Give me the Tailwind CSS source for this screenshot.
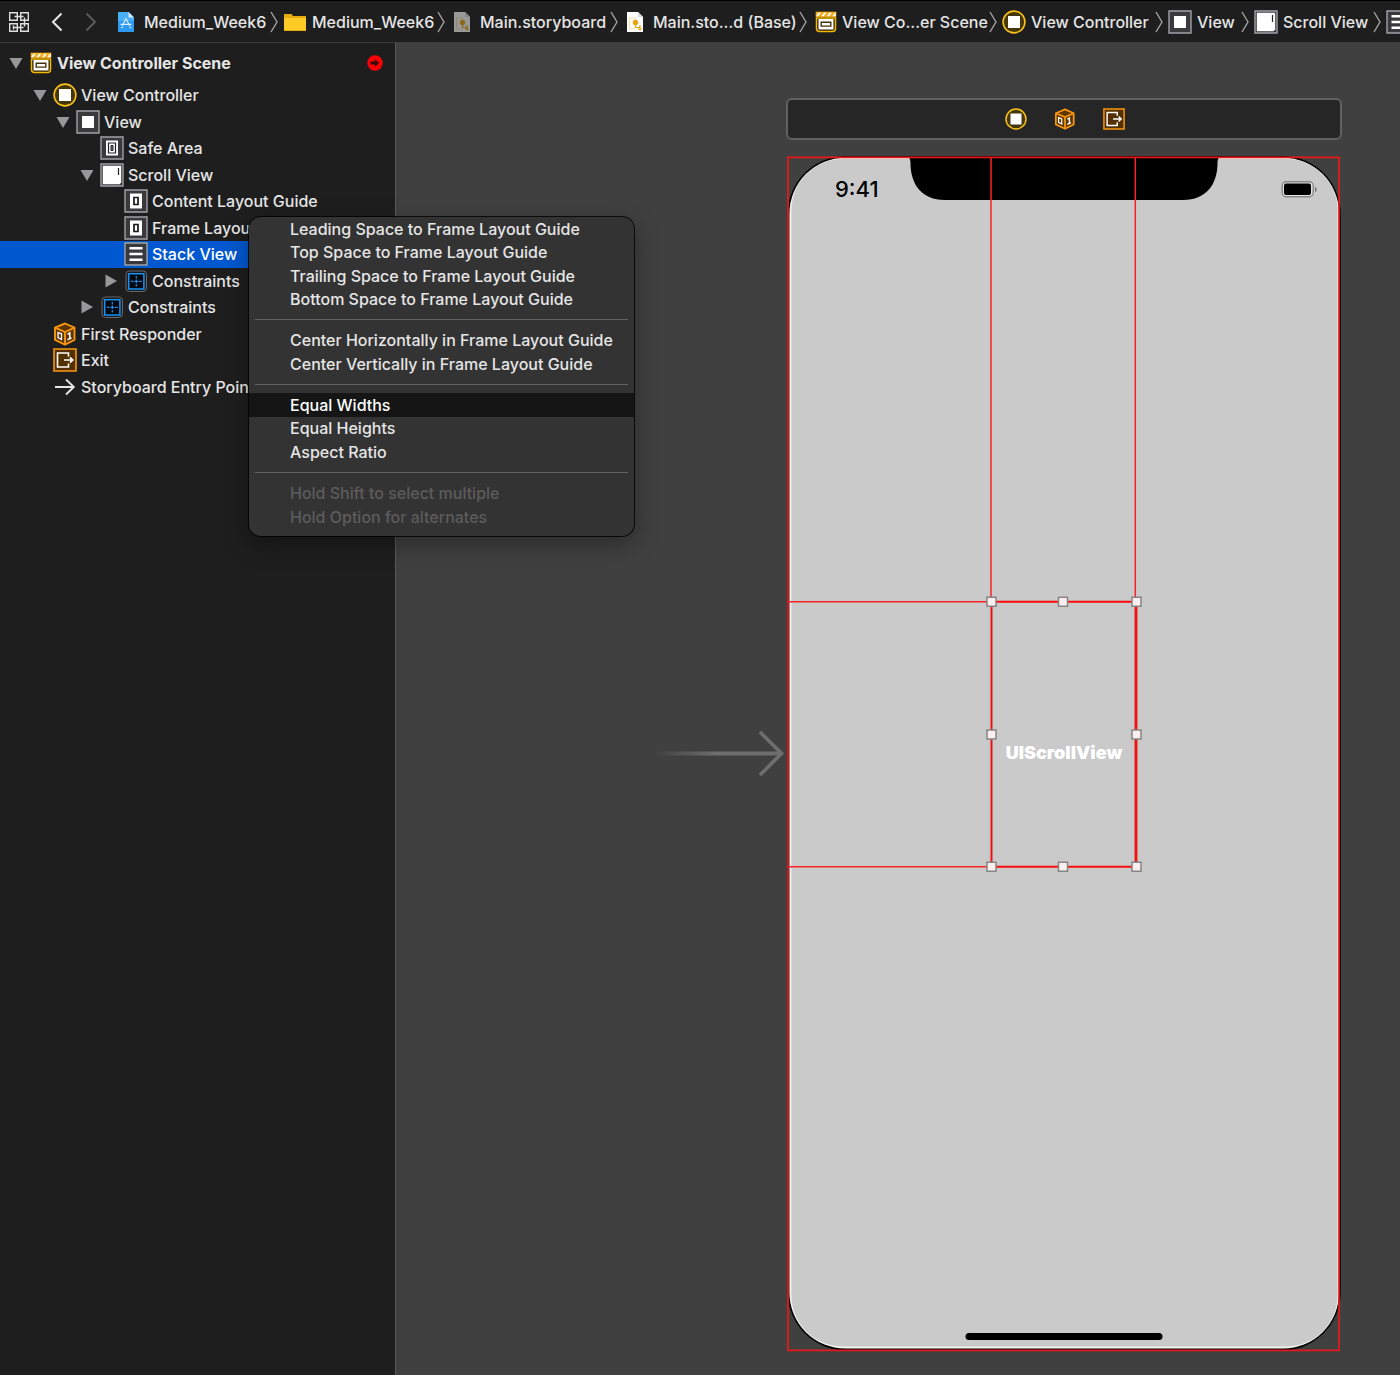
<!DOCTYPE html>
<html lang="en">
<head>
  <meta charset="UTF-8">
  <meta name="viewport" content="width=device-width, initial-scale=1.0">
  <title>Main.storyboard - Medium_Week6</title>
  <script src="https://cdn.jsdelivr.net/npm/@tailwindcss/browser@4"></script>
</head>
<body class="relative min-h-screen flex flex-col overflow-x-hidden bg-[#404040] text-[#e6e6e6] text-base font-medium font-['Inter',sans-serif]">

  <!-- Icon set -->
  <svg class="hidden" aria-hidden="true">
    <symbol id="i-down" viewBox="0 0 14 14"><path d="M.5 2h13L7 13z" fill="#98989a"/></symbol>
    <symbol id="i-right" viewBox="0 0 14 14"><path d="M1.500 .5v13L13 7z" fill="#98989a"/></symbol>
    <symbol id="i-sep" viewBox="0 0 8 22"><path d="M1 1l6 10-6 10" fill="none" stroke="#a3a3a3" stroke-width="1.400"/></symbol>
    <symbol id="i-scene" viewBox="0 0 22 22">
      <path d="M1.500 7v10.500a3 3 0 003 3h13a3 3 0 003-3V7z" fill="#2a2006" stroke="#f5b800" stroke-width="1.500"/>
      <path d="M.7 .7h20.600v5.200H.7z" fill="#f7ae1b"/>
      <path d="M1 5.300L3.500 1.800h2.300l-2.500 3.500zM6.500 5.300L9 1.800h2.300l-2.500 3.500zM12 5.300l2.500-3.500h2.300l-2.500 3.500zM17.300 5.300l2.500-3.500h1v2.500l-.7 1z" fill="#fff"/>
      <path d="M3.500 8h15v10.500h-15z" fill="#fff"/>
      <path d="M6.200 11.300h9.600v3.800H6.200z" fill="#fff" stroke="#42300a" stroke-width="1.400"/>
    </symbol>
    <symbol id="i-vc" viewBox="0 0 24 24">
      <circle cx="12" cy="12" r="10.900" fill="#453807" stroke="#fbc21b" stroke-width="1.600"/>
      <path d="M6 6h12v12H6z" fill="#fff"/>
    </symbol>
    <symbol id="i-box" viewBox="0 0 24 24">
      <path d="M1 1h22v22H1z" fill="#3a3a3d" stroke="#a2a2a6" stroke-width="1.400"/>
    </symbol>
    <symbol id="i-view" viewBox="0 0 24 24"><use href="#i-box"/><path d="M6 6h12v12H6z" fill="#fff"/></symbol>
    <symbol id="i-safe" viewBox="0 0 24 24">
      <use href="#i-box"/><path d="M6 4.500h12v15H6z" fill="#fff"/>
      <path d="M8.500 7h7v10h-7z" fill="#fff" stroke="#222" stroke-width="1.200"/>
      <path d="M11 9.500h2v5h-2z" fill="#777" stroke="#222" stroke-width="1"/>
    </symbol>
    <symbol id="i-guide" viewBox="0 0 24 24">
      <use href="#i-box"/><path d="M6 4.500h12v15H6z" fill="#fff"/>
      <path d="M10 8.500h4v7h-4z" fill="#fff" stroke="#161616" stroke-width="1.700"/>
    </symbol>
    <symbol id="i-scroll" viewBox="0 0 24 24">
      <use href="#i-box"/><path d="M2.800 2.800h18.400v16.700l-1.700 1.700H2.800z" fill="#fff"/>
      <path d="M18.500 5v7" stroke="#222" stroke-width="1.200"/>
    </symbol>
    <symbol id="i-stack" viewBox="0 0 24 24">
      <use href="#i-box"/><path d="M5.500 6.300h13M5.500 12h13M5.500 17.700h13" stroke="#fff" stroke-width="2.600"/>
    </symbol>
    <symbol id="i-cons" viewBox="0 0 24 24">
      <rect x="2" y="2" width="20.500" height="20.500" rx="3.500" fill="#1b1b1d" stroke="#68686c"/>
      <path d="M4.700 4.700h15.200v15.200H4.700z" fill="#04080f" stroke="#1593f5" stroke-width="1.500"/>
      <path d="M7 12.300h2.600M10.600 12.300h3.400M15 12.300h2.600M12.300 7v2.600M12.300 10.600v3.400M12.300 15v2.600" stroke="#1593f5" stroke-width="1.200"/>
    </symbol>
    <symbol id="i-first" viewBox="0 0 24 24">
      <path d="M12 1.500l9.500 4.200v12.300L12 22.700 2 18V5.700z" fill="#5c3500" stroke="#f7960f" stroke-width="1.900" stroke-linejoin="round"/>
      <path d="M2 5.700l10 4.300 9.500-4.300M12 10v12.500" fill="none" stroke="#f7960f" stroke-width="1.900"/>
      <path d="M5 10.500l3.500 1.300v5.600L5 15.700z" fill="none" stroke="#fff" stroke-width="1.300"/>
      <path d="M14.500 12.300l2.300-1.400v6M14.500 17.800l4-1.900" fill="none" stroke="#fff" stroke-width="1.500"/>
    </symbol>
    <symbol id="i-exit" viewBox="0 0 24 24">
      <path d="M1 1h22v22H1z" fill="#543001" stroke="#f7960f" stroke-width="1.600"/>
      <path d="M15.500 8.500V5h-11v14h11v-3.500M11 12h8.500M17 9.300l2.800 2.700-2.800 2.700" fill="none" stroke="#fff" stroke-width="1.600"/>
    </symbol>
    <symbol id="i-entry" viewBox="0 0 24 24">
      <path d="M2 12h18.500M13 4.500l7.800 7.500-7.800 7.500" fill="none" stroke="#e6e6e6" stroke-width="1.900"/>
    </symbol>
    <symbol id="i-proj" viewBox="0 0 18 22">
      <path d="M1 1h10.500L17 6.500V21H1z" fill="#2d9bf3"/>
      <path d="M1 1h10.500L17 6.500V10H1z" fill="#48aff8"/>
      <path d="M11.500 1L17 6.500h-5.500z" fill="#d5ecfe"/>
      <path d="M9 7.500L5.300 15M9 7.500l3.800 7.500M3.500 13.300h11M4 16.500h2M12.500 16.500h2" fill="none" stroke="#d9efff" stroke-width="1.200"/>
    </symbol>
    <symbol id="i-folder" viewBox="0 0 24 22">
      <path d="M1 3h7.500l1.500 2h13v15H1z" fill="#e5ab10"/>
      <path d="M1 7h22v12H1z" fill="#fdcb25"/>
    </symbol>
    <symbol id="i-sb" viewBox="0 0 18 22">
      <path d="M1 1h11l5 5v15H1z" fill="#fff"/>
      <path d="M12 1l5 5h-5z" fill="#d9d9d9"/>
      <path d="M3.500 7h6v4M3.500 7v11h6" fill="none" stroke="#f3dda0" stroke-width="1"/>
      <circle cx="9.500" cy="11.500" r="2.700" fill="#e9a50c"/>
      <path d="M9.500 12v4.500h5M14 14v5.500M12 18h4" fill="none" stroke="#e9a50c" stroke-width="1.200"/>
    </symbol>
  </svg>

  <!-- Jump bar -->
  <header class="flex items-center h-[43px] shrink-0 overflow-hidden bg-[#1e1e1e] border-t border-t-black border-b border-b-[#3d3d3d]">
    <button type="button" aria-label="Related items" class="ml-2 w-[22px] shrink-0">
      <svg class="w-[22px] h-[22px]" viewBox="0 0 22 22" fill="none" stroke="#dedede" stroke-width="1.400">
        <path d="M1.700 1.700h7.600v7.600H1.700zM12.700 1.700h7.600v7.600h-7.600zM1.700 12.700h7.600v7.600H1.700zM12.700 12.700h7.600v7.600h-7.600z"/>
        <path d="M6.500 5.500h4.500M11 5.500h4.500M16.500 6.500v9M5.500 16.500h10M5.500 14.500v4"/>
      </svg>
    </button>
    <button type="button" aria-label="Back" class="ml-5 w-[14px] shrink-0">
      <svg class="w-[14px] h-[20px]" viewBox="0 0 14 20"><path d="M11.500 1.500L3 10l8.500 8.500" fill="none" stroke="#e6e6e6" stroke-width="2"/></svg>
    </button>
    <button type="button" aria-label="Forward" disabled class="ml-5 w-[14px] shrink-0">
      <svg class="w-[14px] h-[20px]" viewBox="0 0 14 20"><path d="M2.500 1.500L11 10l-8.500 8.500" fill="none" stroke="#5a5a5a" stroke-width="2"/></svg>
    </button>
    <nav aria-label="Path" class="ml-[19px] flex items-center whitespace-nowrap">
      <button type="button" class="flex items-center shrink-0 w-[166px]"><svg class="w-[18px] h-[22px] mr-[9px]"><use href="#i-proj"/></svg>Medium_Week6<svg class="w-2 h-[22px] ml-auto mr-[5px]"><use href="#i-sep"/></svg></button>
      <button type="button" class="flex items-center shrink-0 w-[170px]"><svg class="w-6 h-[22px] mr-[5px]"><use href="#i-folder"/></svg>Medium_Week6<svg class="w-2 h-[22px] ml-auto mr-2"><use href="#i-sep"/></svg></button>
      <button type="button" class="flex items-center shrink-0 w-[173px]"><svg class="w-[18px] h-[22px] mr-[9px] opacity-55"><use href="#i-sb"/></svg>Main.storyboard<svg class="w-2 h-[22px] ml-auto mr-2"><use href="#i-sep"/></svg></button>
      <button type="button" class="flex items-center shrink-0 w-[189px]"><svg class="w-[18px] h-[22px] mr-[9px]"><use href="#i-sb"/></svg>Main.sto...d (Base)<svg class="w-2 h-[22px] ml-auto mr-2"><use href="#i-sep"/></svg></button>
      <button type="button" class="flex items-center shrink-0 w-[187px]"><svg class="w-[22px] h-[22px] mr-[5px]"><use href="#i-scene"/></svg>View Co...er Scene<svg class="w-2 h-[22px] ml-auto mr-[5px]"><use href="#i-sep"/></svg></button>
      <button type="button" class="flex items-center shrink-0 w-[166px]"><svg class="w-6 h-6 mr-[5px]"><use href="#i-vc"/></svg>View Controller<svg class="w-2 h-[22px] ml-auto mr-[5px]"><use href="#i-sep"/></svg></button>
      <button type="button" class="flex items-center shrink-0 w-[86px]"><svg class="w-6 h-6 mr-[5px]"><use href="#i-view"/></svg>View<svg class="w-2 h-[22px] ml-auto mr-[5px]"><use href="#i-sep"/></svg></button>
      <button type="button" class="flex items-center shrink-0 w-[132px]"><svg class="w-6 h-6 mr-[5px]"><use href="#i-scroll"/></svg>Scroll View<svg class="w-2 h-[22px] ml-auto mr-[5px]"><use href="#i-sep"/></svg></button>
      <button type="button" aria-label="Stack View" class="flex items-center shrink-0"><svg class="w-6 h-6"><use href="#i-stack"/></svg></button>
    </nav>
  </header>

  <div class="flex flex-1">
    <!-- Document outline -->
    <aside class="w-[396px] shrink-0 bg-[#1e1e1e] border-r border-[#5a5a5a] whitespace-nowrap">
      <div class="flex items-center h-[39px] pl-[9px] pr-3 font-bold">
        <button type="button" aria-label="Collapse scene" class="mr-[7px]"><svg class="w-[14px] h-[14px]"><use href="#i-down"/></svg></button>
        <svg class="w-[22px] h-[22px] mr-[5px]"><use href="#i-scene"/></svg>
        <h2>View Controller Scene</h2>
        <button type="button" aria-label="Show issues" class="ml-auto">
          <svg class="w-4 h-4" viewBox="0 0 16 16"><circle cx="8" cy="8" r="7.700" fill="#fc0006"/><path d="M3.500 6.500h4.300V4l4.500 4-4.500 4V9.500H3.500z" fill="#3a0708"/></svg>
        </button>
      </div>
      <ul class="grid grid-rows-12 h-[318px]">
        <li class="flex items-center pl-[33px]"><button type="button" aria-label="Collapse" class="mr-[6px]"><svg class="w-[14px] h-[14px]"><use href="#i-down"/></svg></button><svg class="w-6 h-6 mr-1"><use href="#i-vc"/></svg>View Controller</li>
        <li class="flex items-center pl-[56px]"><button type="button" aria-label="Collapse" class="mr-[6px]"><svg class="w-[14px] h-[14px]"><use href="#i-down"/></svg></button><svg class="w-6 h-6 mr-1"><use href="#i-view"/></svg>View</li>
        <li class="flex items-center pl-[100px]"><svg class="w-6 h-6 mr-1"><use href="#i-safe"/></svg>Safe Area</li>
        <li class="flex items-center pl-[80px]"><button type="button" aria-label="Collapse" class="mr-[6px]"><svg class="w-[14px] h-[14px]"><use href="#i-down"/></svg></button><svg class="w-6 h-6 mr-1"><use href="#i-scroll"/></svg>Scroll View</li>
        <li class="flex items-center pl-[124px]"><svg class="w-6 h-6 mr-1"><use href="#i-guide"/></svg>Content Layout Guide</li>
        <li class="flex items-center pl-[124px]"><svg class="w-6 h-6 mr-1"><use href="#i-guide"/></svg>Frame Layout Guide</li>
        <li class="flex items-center pl-[124px] bg-[#0058d0] text-white"><svg class="w-6 h-6 mr-1"><use href="#i-stack"/></svg>Stack View</li>
        <li class="flex items-center pl-[104px]"><button type="button" aria-label="Expand" class="mr-[6px]"><svg class="w-[14px] h-[14px]"><use href="#i-right"/></svg></button><svg class="w-6 h-6 mr-1"><use href="#i-cons"/></svg>Constraints</li>
        <li class="flex items-center pl-[80px]"><button type="button" aria-label="Expand" class="mr-[6px]"><svg class="w-[14px] h-[14px]"><use href="#i-right"/></svg></button><svg class="w-6 h-6 mr-1"><use href="#i-cons"/></svg>Constraints</li>
        <li class="flex items-center pl-[53px]"><svg class="w-6 h-6 mr-1"><use href="#i-first"/></svg>First Responder</li>
        <li class="flex items-center pl-[53px]"><svg class="w-6 h-6 mr-1"><use href="#i-exit"/></svg>Exit</li>
        <li class="flex items-center pl-[53px]"><svg class="w-6 h-6 mr-1"><use href="#i-entry"/></svg>Storyboard Entry Point</li>
      </ul>
    </aside>

    <!-- Canvas -->
    <main class="flex-1 grid grid-cols-[130px_556px] content-start justify-end gap-y-4 pt-[55px] pr-[58px]">
      <div class="col-start-2 flex items-center justify-center gap-[27px] h-[42px] pl-[2px] rounded-md border-2 border-[#606060] bg-[#262626]">
        <button type="button" aria-label="View Controller"><svg class="w-[22px] h-[22px]"><use href="#i-vc"/></svg></button>
        <button type="button" aria-label="First Responder"><svg class="w-[22px] h-[22px]"><use href="#i-first"/></svg></button>
        <button type="button" aria-label="Exit"><svg class="w-[22px] h-[22px]"><use href="#i-exit"/></svg></button>
      </div>

      <svg class="row-start-2 self-center w-[130px] h-[46px]" viewBox="0 0 130 46">
        <defs><linearGradient id="fade"><stop offset="0" stop-color="#6e6e6e" stop-opacity="0"/><stop offset=".5" stop-color="#6e6e6e"/></linearGradient></defs>
        <path d="M-3 20.500h127v4H-3z" fill="url(#fade)"/>
        <path d="M104 1l21.500 21.500L104 44" fill="none" stroke="#6e6e6e" stroke-width="3.700"/>
      </svg>

      <div class="row-start-2 relative">
        <svg class="block w-full" viewBox="0 0 556 1196" fill="none">
          <!-- screen -->
          <rect x="1.700" y="0" width="553" height="1194.300" rx="58" fill="#000"/>
          <rect x="3.400" y="1.700" width="549.700" height="1190.900" rx="56" fill="#f2f2f2"/>
          <rect x="5.400" y="3" width="546.200" height="1187.500" rx="51.500" fill="#cacaca"/>
          <path d="M119 0c4 0 5.500 3 5.500 7 0 22 12 37 34 37h239c22 0 34-15 34-37 0-4 1.500-7 5.500-7z" fill="#000"/>
          <!-- battery -->
          <rect x="496.200" y="25.700" width="31" height="15" rx="4" fill="#e2e2e2" stroke="#858585" stroke-width="1.400"/>
          <rect x="498" y="27.500" width="27" height="11.500" rx="2" fill="#000"/>
          <path d="M529 31c2.300.5 2.300 4.500 0 5z" fill="#777"/>
          <!-- home indicator -->
          <rect x="179.500" y="1177" width="197" height="7" rx="3.500" fill="#000"/>
          <!-- constraint lines -->
          <path d="M2 1.300h551v1193H2z" stroke="#e8181a" stroke-width="1.700"/>
          <path d="M205 2v444M349.300 2v444M2 445.800h203M2 710.800h203" stroke="#fa2222" stroke-width="1.500"/>
          <path d="M205.500 446v265M350 446v265" stroke="#b7c6c6" stroke-width="4"/>
          <path d="M205.500 446v265M205 445.700h145M205 710.700h145" stroke="#fb0d0d" stroke-width="1.900"/>
          <path d="M350 446v265" stroke="#fb0d0d" stroke-width="2.800"/>
          <!-- handles -->
          <g fill="#fbeeee" stroke="#858585" stroke-width="1.500">
            <path d="M201 441.300h9v9h-9zM272.500 441.300h9v9h-9zM346 441.300h9v9h-9z"/>
            <path d="M201 574h9v9h-9zM346 574h9v9h-9z"/>
            <path d="M201 706.300h9v9h-9zM272.500 706.300h9v9h-9zM346 706.300h9v9h-9z"/>
          </g>
        </svg>
        <span class="absolute left-[49px] top-[19px] text-[22px] leading-7 font-medium text-black">9:41</span>
        <span class="absolute inset-x-0 top-[585px] text-center text-lg leading-6 font-black text-white">UIScrollView</span>
      </div>
    </main>
  </div>

  <!-- Constraint menu -->
  <div role="menu" class="absolute left-[249px] top-[217px] w-[385px] flex flex-col pb-[7px] rounded-xl overflow-hidden whitespace-nowrap bg-[#333333] ring-1 ring-black/80 shadow-[0_8px_24px_rgba(0,0,0,0.35)]">
    <div class="grid grid-rows-4 h-[94px]">
      <button type="button" role="menuitem" class="pl-[41px] text-left leading-none">Leading Space to Frame Layout Guide</button>
      <button type="button" role="menuitem" class="pl-[41px] text-left leading-none">Top Space to Frame Layout Guide</button>
      <button type="button" role="menuitem" class="pl-[41px] text-left leading-none">Trailing Space to Frame Layout Guide</button>
      <button type="button" role="menuitem" class="pl-[41px] text-left leading-none">Bottom Space to Frame Layout Guide</button>
    </div>
    <hr class="mx-[6px] my-2 border-t border-[#626262]">
    <div class="grid grid-rows-2 h-12">
      <button type="button" role="menuitem" class="pl-[41px] text-left leading-none">Center Horizontally in Frame Layout Guide</button>
      <button type="button" role="menuitem" class="pl-[41px] text-left leading-none">Center Vertically in Frame Layout Guide</button>
    </div>
    <hr class="mx-[6px] my-2 border-t border-[#626262]">
    <div class="grid grid-rows-3 h-[71px]">
      <button type="button" role="menuitem" class="pl-[41px] text-left leading-none bg-[#151515] text-white">Equal Widths</button>
      <button type="button" role="menuitem" class="pl-[41px] text-left leading-none">Equal Heights</button>
      <button type="button" role="menuitem" class="pl-[41px] text-left leading-none">Aspect Ratio</button>
    </div>
    <hr class="mx-[6px] my-2 border-t border-[#626262]">
    <div class="grid grid-rows-2 h-12 text-[#5c5c5c]">
      <button type="button" role="menuitem" disabled class="pl-[41px] text-left leading-none">Hold Shift to select multiple</button>
      <button type="button" role="menuitem" disabled class="pl-[41px] text-left leading-none">Hold Option for alternates</button>
    </div>
  </div>

</body>
</html>
